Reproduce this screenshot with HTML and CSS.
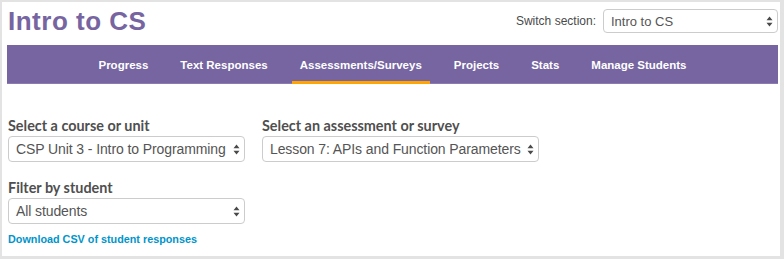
FILE: index.html
```html
<!DOCTYPE html>
<html>
<head>
<meta charset="utf-8">
<link rel="stylesheet" href="styles.css">
</head>
<body>
<div class="frame">
  <header class="header">
    <h1 class="title">Intro to CS</h1>
    <div class="switch">
      <span class="switch-label">Switch section:</span>
      <div class="select select-small">
        <span class="select-text">Intro to CS</span>
        <svg class="arrows" width="7" height="11" viewBox="0 0 7 11"><path d="M3.5 0.5 L6.5 4.2 L0.5 4.2 Z M3.5 10.5 L6.5 6.8 L0.5 6.8 Z" fill="#4a4a4a"/></svg>
      </div>
    </div>
  </header>
  <nav class="nav">
    <a class="nav-item">Progress</a>
    <a class="nav-item">Text Responses</a>
    <a class="nav-item active">Assessments/Surveys</a>
    <a class="nav-item">Projects</a>
    <a class="nav-item">Stats</a>
    <a class="nav-item">Manage Students</a>
  </nav>
  <main class="content">
    <div class="row">
      <div class="group col1">
        <label class="label">Select a course or unit</label>
        <div class="select">
          <span class="select-text">CSP Unit 3 - Intro to Programming</span>
          <svg class="arrows" width="7" height="11" viewBox="0 0 7 11"><path d="M3.5 0.5 L6.5 4.2 L0.5 4.2 Z M3.5 10.5 L6.5 6.8 L0.5 6.8 Z" fill="#4a4a4a"/></svg>
        </div>
      </div>
      <div class="group col2">
        <label class="label">Select an assessment or survey</label>
        <div class="select">
          <span class="select-text">Lesson 7: APIs and Function Parameters</span>
          <svg class="arrows" width="7" height="11" viewBox="0 0 7 11"><path d="M3.5 0.5 L6.5 4.2 L0.5 4.2 Z M3.5 10.5 L6.5 6.8 L0.5 6.8 Z" fill="#4a4a4a"/></svg>
        </div>
      </div>
    </div>
    <div class="group col1 second">
      <label class="label">Filter by student</label>
      <div class="select">
        <span class="select-text">All students</span>
        <svg class="arrows" width="7" height="11" viewBox="0 0 7 11"><path d="M3.5 0.5 L6.5 4.2 L0.5 4.2 Z M3.5 10.5 L6.5 6.8 L0.5 6.8 Z" fill="#4a4a4a"/></svg>
      </div>
    </div>
    <a class="download">Download CSV of student responses</a>
  </main>
</div>
</body>
</html>
```
FILE: styles.css
```css
* { box-sizing: border-box; }
html, body { margin: 0; padding: 0; }
body {
  background: #e3e3e3;
  width: 784px;
  height: 259px;
  padding: 2px 4px 3px 2px;
  font-family: "Liberation Sans", Arial, sans-serif;
}
.frame {
  background: #fff;
  height: 254px;
  padding: 0 2px 0 5px;
}
.header {
  height: 43px;
  display: flex;
  justify-content: space-between;
  align-items: center;
  padding-bottom: 5px;
}
.title {
  margin: 0 0 0 1px;
  font-size: 26px;
  line-height: 1;
  font-weight: bold;
  color: #7665a0;
  letter-spacing: 0.5px;
}
.switch {
  display: flex;
  align-items: center;
  gap: 7px;
}
.switch-label {
  font-size: 12px;
  color: #4a4a4a;
}
.select {
  position: relative;
  height: 26px;
  border: 1px solid #ccc;
  border-radius: 4px;
  display: flex;
  align-items: center;
  padding: 0 14px 0 7px;
  background: #fff;
}
.select-small {
  width: 175px;
  height: 24px;
}
.select-text {
  font-size: 14px;
  color: #555;
  white-space: nowrap;
  letter-spacing: -0.1px;
}
.select-small .select-text { font-size: 13px; letter-spacing: 0; }
.arrows {
  position: absolute;
  right: 4px;
  top: 50%;
  margin-top: -5.5px;
}
.nav {
  height: 39px;
  background: #7665a0;
  display: flex;
  justify-content: center;
  gap: 16px;
  border-bottom: 1px solid #8a7bb0;
}
.nav-item {
  display: flex;
  align-items: center;
  padding: 1px 8px 0;
  color: #fff;
  font-size: 11.5px;
  font-weight: bold;
}
.nav-item.active {
  box-shadow: inset 0 -3px 0 #ffa400;
  margin-bottom: -1px;
}
.content {
  padding: 33px 0 0 1px;
}
.row {
  display: flex;
  gap: 17px;
}
.group { display: flex; flex-direction: column; }
.col1 { width: 237px; }
.col2 { width: 277px; }
.second { margin-top: 17px; }
.label {
  font-family: Lato, "Liberation Sans", sans-serif;
  font-size: 14.4px;
  font-weight: bold;
  color: #4f4f4f;
  line-height: 17px;
  margin-bottom: 2px;
}
.download {
  display: block;
  margin-top: 9px;
  font-size: 10.8px;
  font-weight: bold;
  color: #0094ca;
}
```
